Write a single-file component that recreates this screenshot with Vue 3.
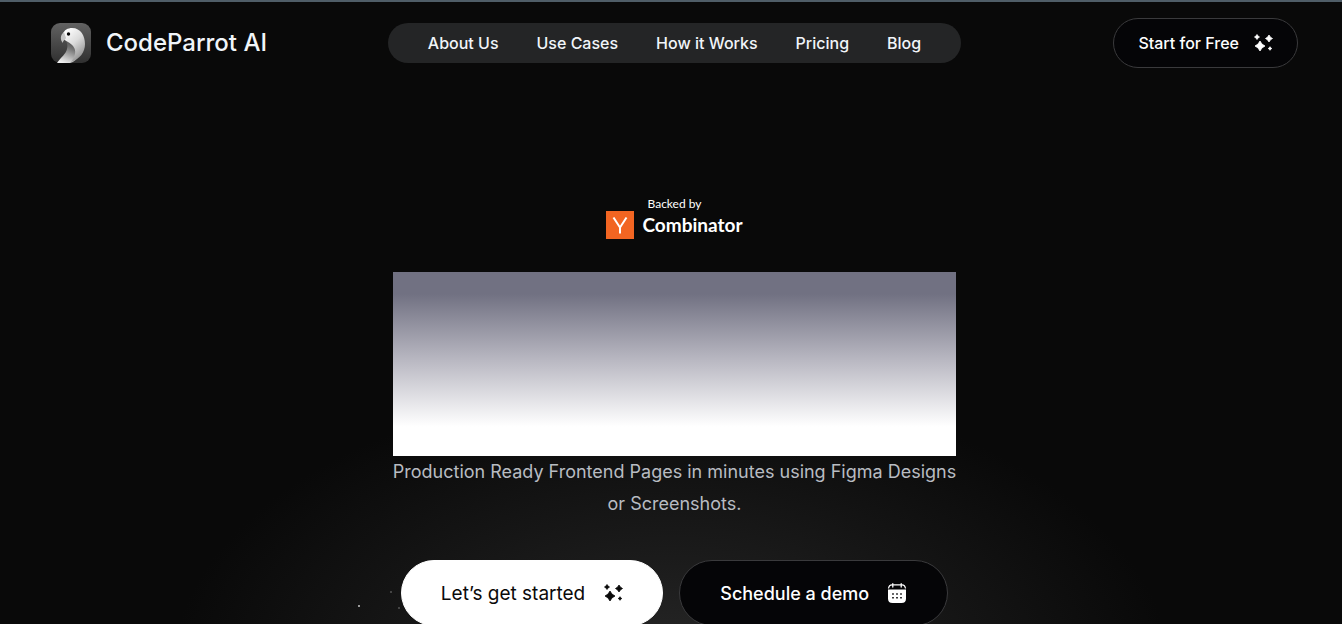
<script setup>
const links = ['About Us', 'Use Cases', 'How it Works', 'Pricing', 'Blog']
</script>

<template>
  <div class="page">
    <header class="header">
      <a class="brand" href="#">
        <svg class="brand-mark" viewBox="0 0 40 40" aria-hidden="true">
          <defs>
            <linearGradient id="tile" x1="0" y1="0" x2="0" y2="1">
              <stop offset="0" stop-color="#626262" />
              <stop offset="1" stop-color="#303030" />
            </linearGradient>
            <linearGradient id="body" x1="0.2" y1="0" x2="0.8" y2="1">
              <stop offset="0" stop-color="#ffffff" />
              <stop offset="0.45" stop-color="#dcdcdc" />
              <stop offset="1" stop-color="#858585" />
            </linearGradient>
            <linearGradient id="tail" x1="0.75" y1="0" x2="0.3" y2="1">
              <stop offset="0" stop-color="#484848" />
              <stop offset="0.35" stop-color="#777777" />
              <stop offset="1" stop-color="#f0f0f0" />
            </linearGradient>
          </defs>
          <rect width="40" height="40" rx="9" fill="url(#tile)" />
          <path d="M15 18C20 19 24 23 24 28L28 33C26 36 23 39 19 40H6C10 34 15 31 16 26C17 22 16 20 15 18Z" fill="url(#tail)" />
          <path d="M12 11C13 7 17 5 21 5C30 5 34 13 34 21C34 29 29 36 20 39C24 34 26 28 22 23C19 19 15 19 12 15Z" fill="url(#body)" />
          <path d="M13 9C9 12 9 17 12 20C12 17 14 17 15 15Z" fill="#c4c4c4" />
          <circle cx="17.500" cy="11" r="1.700" fill="#080808" />
        </svg>
        <span>CodeParrot AI</span>
      </a>
      <nav class="nav">
        <a v-for="link in links" :key="link" href="#">{{ link }}</a>
      </nav>
      <div class="header-action">
        <button class="btn btn-small btn-dark" type="button">
          Start for Free
          <svg class="icon stars" viewBox="0 0 20 20" aria-hidden="true">
            <path d="M7 8Q8.400 11.600 12 13Q8.400 14.400 7 18Q5.600 14.400 2 13Q5.600 11.600 7 8Z" />
            <path d="M16 2Q17 4.500 19.500 5.500Q17 6.500 16 9Q15 6.500 12.500 5.500Q15 4.500 16 2Z" />
            <path d="M4 1.500Q4.700 3.300 6.500 4Q4.700 4.700 4 6.500Q3.300 4.700 1.500 4Q3.300 3.300 4 1.500Z" />
            <path d="M17 13.700Q17.500 15 18.800 15.500Q17.500 16 17 17.300Q16.500 16 15.200 15.500Q16.500 15 17 13.700Z" />
          </svg>
        </button>
      </div>
    </header>

    <main class="hero">
      <div class="backer">
        <span class="backer-label">Backed by</span>
        <div class="backer-name">
          <svg class="yc" viewBox="0 0 28 28" aria-hidden="true">
            <rect width="28" height="28" fill="#f26522" />
            <path d="M7.500 6.500L14 16.500L20.500 6.500M14 15.500V22.500" fill="none" stroke="#fff" stroke-width="2" />
          </svg>
          <span>Combinator</span>
        </div>
      </div>
      <div class="headline"></div>
      <p class="lead">Production Ready Frontend Pages in minutes using Figma Designs or Screenshots.</p>
      <div class="actions">
        <svg class="sparks" viewBox="0 0 50 30" aria-hidden="true">
          <circle cx="8" cy="21" r="1" fill="#c8c8c8" />
          <circle cx="40" cy="7" r="1" fill="#555" />
          <circle cx="48" cy="23" r="0.700" fill="#999" />
        </svg>
        <button class="btn btn-large btn-light" type="button">
          Let’s get started
          <svg class="icon stars" viewBox="0 0 20 20" aria-hidden="true">
            <path d="M7 8Q8.400 11.600 12 13Q8.400 14.400 7 18Q5.600 14.400 2 13Q5.600 11.600 7 8Z" />
            <path d="M16 2Q17 4.500 19.500 5.500Q17 6.500 16 9Q15 6.500 12.500 5.500Q15 4.500 16 2Z" />
            <path d="M4 1.500Q4.700 3.300 6.500 4Q4.700 4.700 4 6.500Q3.300 4.700 1.500 4Q3.300 3.300 4 1.500Z" />
            <path d="M17 13.700Q17.500 15 18.800 15.500Q17.500 16 17 17.300Q16.500 16 15.200 15.500Q16.500 15 17 13.700Z" />
          </svg>
        </button>
        <button class="btn btn-large btn-dark" type="button">
          Schedule a demo
          <svg class="icon" viewBox="0 0 20 20" aria-hidden="true">
            <path d="M5.800 0.700V4M14.200 0.700V4" fill="none" stroke="currentColor" stroke-width="1.300" stroke-linecap="round" />
            <path d="M1.500 5.500Q2 2 5 1.900H15Q18 2 18.500 5.500" fill="none" stroke="currentColor" stroke-width="1.300" />
            <path d="M1 6.500H19V15.500Q19 20 14.500 20H5.500Q1 20 1 15.500Z" fill="currentColor" />
            <path d="M5.200 11H6.800M9.200 11H10.800M13.200 11H14.800M5.200 14.800H6.800M9.200 14.800H10.800M13.200 14.800H14.800" fill="none" stroke="#050507" stroke-width="1.500" />
          </svg>
        </button>
      </div>
    </main>
  </div>
</template>

<style>
body {
  margin: 0;
  background: #090909;
}
</style>

<style scoped>
.page {
  box-sizing: border-box;
  height: 100vh;
  overflow: hidden;
  padding: 16px 44px 0 51px;
  border-top: 2px solid #4f5d67;
  background: radial-gradient(500px 290px at 50% 108%, #282828, #1b1b1b 40%, #090909);
  color: #fff;
  font-family: Inter, "Liberation Sans", sans-serif;
}

.header {
  display: grid;
  grid-template-columns: 1fr auto 1fr;
  align-items: center;
}

.brand {
  display: flex;
  align-items: center;
  gap: 15px;
  color: #f1f5f9;
  font-size: 24px;
  font-weight: 500;
  line-height: 32px;
  text-decoration: none;
}

.brand-mark {
  width: 40px;
  height: 40px;
}

.nav {
  display: flex;
  gap: 38px;
  padding: 8px 40px;
  border-radius: 20px;
  background: #242526;
}

.nav a {
  color: #f1f5f9;
  font-size: 16px;
  font-weight: 500;
  line-height: 24px;
  text-decoration: none;
}

.header-action {
  display: flex;
  justify-content: flex-end;
}

.btn {
  display: flex;
  align-items: center;
  box-sizing: border-box;
  border: 1px solid #3a3a3c;
  border-radius: 40px;
  font-family: inherit;
  white-space: nowrap;
}

.btn-dark {
  background: #050507;
  color: #fff;
  font-weight: 500;
}

.btn-light {
  border-color: #fff;
  background: #fff;
  color: #0a0a0a;
  font-weight: 400;
}

.btn-small {
  gap: 14px;
  height: 50px;
  padding: 0 24px;
  font-size: 16px;
}

.btn-large {
  gap: 18px;
  height: 66px;
  padding: 0 40px;
  font-size: 18px;
}

.btn-large.btn-light {
  padding: 0 39px;
  font-size: 19px;
}

.icon {
  width: 20px;
  height: 20px;
}

.stars {
  fill: currentColor;
  stroke: currentColor;
  stroke-width: 0.8;
  stroke-linejoin: round;
}

.hero {
  display: flex;
  flex-direction: column;
  align-items: center;
  padding-top: 128px;
}

.backer {
  display: flex;
  flex-direction: column;
  align-items: center;
  font-family: Lato, sans-serif;
}

.backer-label {
  font-size: 12px;
  line-height: 15px;
}

.backer-name {
  display: flex;
  align-items: center;
  gap: 8px;
  font-size: 19px;
  font-weight: 700;
  line-height: 28px;
}

.yc {
  width: 28px;
  height: 28px;
}

.headline {
  width: 100%;
  max-width: 563px;
  height: 184px;
  margin-top: 33px;
  background: linear-gradient(#717182 12%, #b9b8c2 48%, #fff 84%);
}

.lead {
  max-width: 576px;
  margin: 0;
  color: #b8bcc2;
  font-size: 18px;
  line-height: 32px;
  text-align: center;
}

.actions {
  position: relative;
  display: flex;
  gap: 16px;
  margin-top: 40px;
}

.sparks {
  position: absolute;
  top: 25px;
  right: 100%;
  width: 50px;
  height: 30px;
}
</style>
